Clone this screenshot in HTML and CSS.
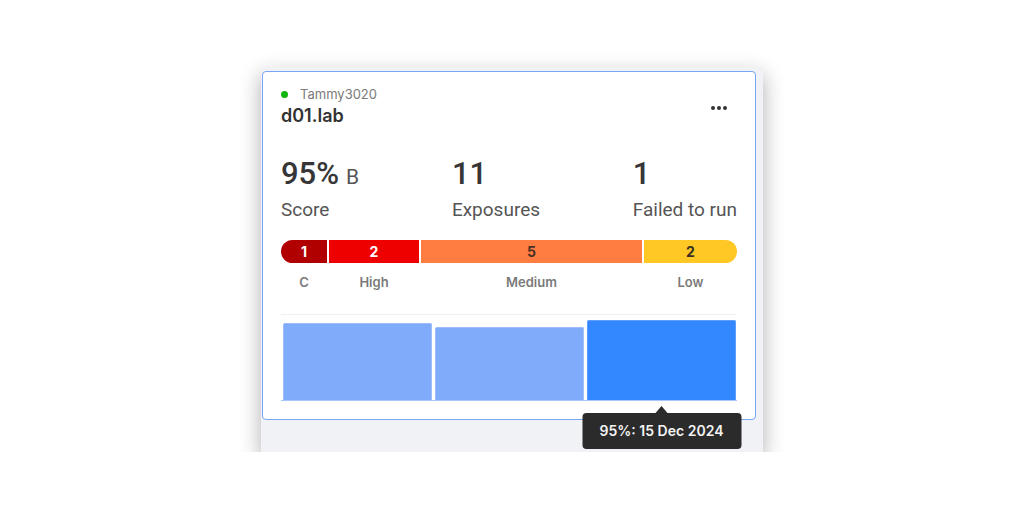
FILE: index.html
```html
<!DOCTYPE html>
<html>
<head>
<meta charset="utf-8">
<link rel="stylesheet" href="styles.css">
</head>
<body>
<div class="panel">
  <div class="card">
    <div class="head">
      <div class="head-text">
        <div class="owner"><span class="dot"></span>Tammy3020</div>
        <div class="title">d01.lab</div>
      </div>
      <svg class="more" width="16" height="4" viewBox="0 0 16 4"><circle cx="2" cy="2" r="2"/><circle cx="8" cy="2" r="2"/><circle cx="14" cy="2" r="2"/></svg>
    </div>
    <div class="stats">
      <div class="stat">
        <div class="num">95%<span class="grade">B</span></div>
        <div class="label">Score</div>
      </div>
      <div class="stat">
        <div class="num">11</div>
        <div class="label">Exposures</div>
      </div>
      <div class="stat">
        <div class="num">1</div>
        <div class="label">Failed to run</div>
      </div>
    </div>
    <div class="sev-bar">
      <div class="seg crit" style="width:46px">1</div>
      <div class="seg high" style="width:90px">2</div>
      <div class="seg med" style="width:221px">5</div>
      <div class="seg low" style="width:93px">2</div>
    </div>
    <div class="sev-legend">
      <div style="width:46px">C</div>
      <div style="width:90px">High</div>
      <div style="width:221px">Medium</div>
      <div style="width:93px">Low</div>
    </div>
    <div class="chart">
      <div class="bar" style="height:77px"></div>
      <div class="bar" style="height:73px"></div>
      <div class="bar active" style="height:80px">
        <div class="tooltip">95%: 15 Dec 2024</div>
      </div>
    </div>
  </div>
</div>
</body>
</html>
```
FILE: styles.css
```css
* { box-sizing: border-box; }
html, body { margin: 0; padding: 0; background: #fff; }
body {
  font-family: Inter, "Noto Sans", sans-serif;
  color: #333;
  padding-top: 67px;
}
.panel {
  width: 502px;
  height: 385px;
  margin: 0 auto;
  background: #f1f2f6;
  padding: 4px 7px 0 1px;
  box-shadow: 0 8px 20px rgba(0,0,0,0.32);
}
.card {
  height: 349px;
  background: #fff;
  border: 1px solid #78a5f5;
  border-radius: 4px;
  padding: 14px 18px 0 18px;
}
.head {
  display: flex;
  justify-content: space-between;
  align-items: flex-start;
}
.owner {
  display: flex;
  align-items: center;
  font-size: 13px;
  line-height: 16px;
  color: #7a7a7a;
}
.dot {
  width: 7px; height: 7px;
  border-radius: 50%;
  background: #0fb40f;
  margin: 0 12px 0 0;
}
.title {
  font-size: 18px;
  line-height: 22px;
  font-weight: 600;
  color: #333;
  margin-top: 3px;
}
.more { fill: #333; margin-top: 20px; margin-right: 10px; }
.stats {
  display: flex;
  justify-content: space-between;
  margin-top: 29px;
}
.num {
  font-family: Roboto, "Noto Sans", sans-serif;
  font-size: 31px;
  line-height: 36px;
  height: 36px;
  font-weight: 500;
  color: #363636;
}
.grade {
  font-size: 21px;
  font-weight: 400;
  color: #555;
  margin-left: 7px;
  line-height: 1;
}
.label {
  font-family: Roboto, "Noto Sans", sans-serif;
  font-size: 19px;
  line-height: 24px;
  color: #555;
  margin-top: 6px;
}
.sev-bar {
  display: flex;
  gap: 2px;
  margin-top: 18px;
  height: 23px;
}
.seg {
  display: flex;
  align-items: center;
  justify-content: center;
  font-size: 14px;
  font-weight: 700;
}
.crit { background: #b10000; color: #fff; border-radius: 12px 0 0 12px; }
.high { background: #ef0000; color: #fff; }
.med { background: #ff7d40; color: #4a3024; }
.low { background: #ffc825; color: #3a3020; border-radius: 0 12px 12px 0; }
.sev-legend {
  display: flex;
  gap: 2px;
  margin-top: 10px;
  font-size: 13px;
  line-height: 18px;
  font-weight: 600;
  color: #7a7a7a;
  text-align: center;
}
.chart {
  margin-top: 23px;
  border-top: 1px solid #f0f0f3;
  height: 87px;
  display: flex;
  align-items: flex-end;
  gap: 3px;
  padding: 0 1px 0 2px;
  border-bottom: 1px solid #a9c6fa;
}
.bar {
  flex: 1;
  background: #80aafa;
  border: 1px solid #9dbdfb;
  border-bottom: none;
  border-radius: 2px 2px 0 0;
  position: relative;
}
.bar.active { background: #3387ff; border-color: #5c9dff; }
.tooltip {
  position: absolute;
  top: 100%;
  left: 50%;
  transform: translateX(-50%);
  margin-top: 13px;
  background: #2b2b2b;
  color: #f4f4f4;
  font-size: 14px;
  font-weight: 600;
  line-height: 36px;
  height: 36px;
  width: 159px;
  text-align: center;
  border-radius: 4px;
  white-space: nowrap;
}
.tooltip::before {
  content: "";
  position: absolute;
  left: 50%;
  top: -7px;
  margin-left: -6px;
  border-left: 6px solid transparent;
  border-right: 6px solid transparent;
  border-bottom: 7px solid #2b2b2b;
}
```
